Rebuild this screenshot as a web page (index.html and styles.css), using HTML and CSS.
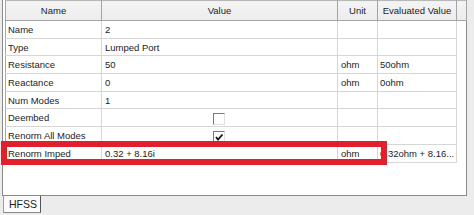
FILE: index.html
```html
<!DOCTYPE html>
<html>
<head>
<meta charset="utf-8">
<link rel="stylesheet" href="styles.css">
</head>
<body>
<div class="panel">
  <table class="grid">
    <colgroup>
      <col class="c-name"><col class="c-value"><col class="c-unit"><col class="c-eval"><col class="c-pad">
    </colgroup>
    <thead>
      <tr><th>Name</th><th>Value</th><th>Unit</th><th>Evaluated Value</th><th class="pad"></th></tr>
    </thead>
    <tbody>
      <tr><td>Name</td><td class="v">2</td><td class="u"></td><td class="e"></td><td class="pad"></td></tr>
      <tr><td>Type</td><td class="v">Lumped Port</td><td class="u"></td><td class="e"></td><td class="pad"></td></tr>
      <tr><td>Resistance</td><td class="v">50</td><td class="u">ohm</td><td class="e">50ohm</td><td class="pad"></td></tr>
      <tr><td>Reactance</td><td class="v">0</td><td class="u">ohm</td><td class="e">0ohm</td><td class="pad"></td></tr>
      <tr><td>Num Modes</td><td class="v">1</td><td class="u"></td><td class="e"></td><td class="pad"></td></tr>
      <tr><td>Deembed</td><td class="v center"><span class="check"></span></td><td class="u"></td><td class="e"></td><td class="pad"></td></tr>
      <tr><td>Renorm All Modes</td><td class="v center"><span class="check checked"><svg viewBox="0 0 10 10" width="10" height="10"><path d="M2 5 L4 7.5 L8.5 2.5" fill="none" stroke="#111" stroke-width="1.8"/></svg></span></td><td class="u"></td><td class="e"></td><td class="pad"></td></tr>
      <tr><td>Renorm Imped</td><td class="v">0.32 + 8.16i</td><td class="u">ohm</td><td class="e">0.32ohm + 8.16...</td><td class="pad"></td></tr>
    </tbody>
  </table>
  <div class="highlight"></div>
</div>
<div class="tabs"><div class="tab">HFSS</div></div>
</body>
</html>
```
FILE: styles.css
```css
html, body {
  margin: 0;
  padding: 0;
}
body {
  width: 474px;
  height: 215px;
  background: #ececec;
  font-family: "Liberation Sans", Arial, sans-serif;
  font-size: 9.5px;
  color: #1c1c1c;
  overflow: hidden;
  position: relative;
}
.panel {
  position: relative;
  margin-left: 2px;
  width: 465px;
  height: 196px;
  background: #fff;
  border-left: 1px solid #8a8a8a;
  border-right: 1px solid #8a8a8a;
  border-bottom: 1px solid #8a8a8a;
  padding-left: 2px;
  box-sizing: border-box;
}
.grid {
  border-collapse: collapse;
  table-layout: fixed;
  width: 461px;
}
.c-name { width: 96px; }
.c-value { width: 236px; }
.c-unit { width: 40px; }
.c-eval { width: 79px; }
.c-pad { width: 10px; }
th {
  height: 19px;
  padding: 0;
  font-weight: normal;
  text-align: center;
  background: linear-gradient(#f4f4f4, #ececec);
  border: 1px solid #a4a4a4;
  border-top: 1px solid #b8b8b8;
  white-space: nowrap;
  overflow: hidden;
}
td {
  height: 16.7px;
  padding: 0 0 0 3px;
  border: 1px solid #d6d6d6;
  white-space: nowrap;
  overflow: hidden;
  vertical-align: middle;
}
td:first-child {
  padding-left: 2px;
  border-left: 1px solid #a8a8a8;
}
td.center {
  text-align: center;
  padding-left: 0;
}
td.e {
  padding-left: 2px;
  text-overflow: clip;
}
td.pad {
  border: none;
  border-left: 1px solid #d6d6d6;
}
th.pad {
  border-right: 1px solid #a4a4a4;
}
.check {
  display: inline-block;
  width: 12px;
  height: 12px;
  box-sizing: border-box;
  border-top: 1px solid #7a7a7a;
  border-left: 1px solid #7a7a7a;
  border-right: 1px solid #e0e0e0;
  border-bottom: 1px solid #e0e0e0;
  background: #fff;
  vertical-align: middle;
  position: relative;
  left: -1px;
  top: 1px;
}
.check svg {
  display: block;
  margin: 0;
}
.highlight {
  position: absolute;
  left: -2px;
  top: 141px;
  width: 386px;
  height: 24px;
  border: 6px solid #e21f2c;
  box-sizing: border-box;
}
.tabs {
  padding-left: 3px;
}
.tab {
  width: 38px;
  height: 17px;
  box-sizing: border-box;
  background: #fafafa;
  border-left: 1px solid #9a9a9a;
  border-right: 1px solid #555;
  border-bottom: 1px solid #8a8a8a;
  font-size: 10.5px;
  padding-left: 5px;
  line-height: 17px;
}
```
